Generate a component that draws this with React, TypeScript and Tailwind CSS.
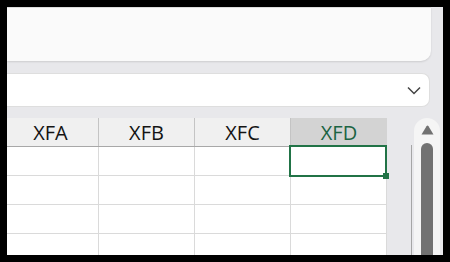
import React from "react";

const cols = ["XFA", "XFB", "XFC", "XFD"];
const rows = [0, 1, 2, 3];

export default function App() {
  return (
    <div className="w-[450px] h-[262px] bg-black p-[7px]" style={{ fontFamily: '"Open Sans", "Noto Sans", sans-serif' }}>
      <div className="w-[436px] h-[248px] bg-[#e8e8eb] overflow-hidden flex flex-col">
        {/* top panel */}
        <div className="h-[54px] mr-[12px] shrink-0 bg-[#fafafa] border-t border-[#dcdcdc] rounded-br-[10px] shadow-[0_1px_2px_rgba(0,0,0,0.12)]" />

        {/* dropdown */}
        <div className="mt-[12px] h-[34px] mr-[13px] shrink-0 bg-white border border-l-0 border-[#dedede] rounded-r-[8px] flex items-center justify-end pr-[8px]">
          <svg width="14" height="9" viewBox="0 0 14 9" fill="none">
            <path d="M1 1.5 L7 7.5 L13 1.5" stroke="#444" strokeWidth="1.5" />
          </svg>
        </div>

        {/* sheet + scrollbar */}
        <div className="mt-[11px] flex flex-1 min-h-0">
          <div className="-ml-[4px] w-[384px] shrink-0">
            <div className="flex h-[29px] border-b border-[#a8a8a8]">
              {cols.map((c) => (
                <div
                  key={c}
                  className={`w-[96px] shrink-0 border-r border-[#c4c4c4] flex items-center justify-center text-[20px] leading-none pt-[1px] ${
                    c === "XFD" ? "bg-[#d3d3d3] text-[#1b6443] border-r-0" : "bg-[#f0f0f0] text-[#141414]"
                  }`}
                >
                  {c}
                </div>
              ))}
            </div>
            {rows.map((r) => (
              <div key={r} className="flex h-[29px] bg-white border-b border-[#dadada]">
                {cols.map((c) => (
                  <div key={c} className="relative w-[96px] shrink-0 border-r border-[#dadada]">
                    {r === 0 && c === "XFD" && (
                      <div className="absolute -left-[2px] -top-[2px] w-[98px] h-[32px] border-2 border-[#217346] z-10">
                        <div className="absolute -right-[4px] -bottom-[4px] w-[6px] h-[6px] bg-[#217346]" />
                      </div>
                    )}
                  </div>
                ))}
              </div>
            ))}
          </div>

          <div className="w-[25px] shrink-0 flex justify-end">
            <div className="mt-[27px] w-px bg-[#a6a6a6]" />
          </div>
          <div className="ml-[2px] w-[26px] shrink-0 bg-[#f5f5f5] rounded-t-full flex flex-col items-center pt-[7px]">
            <svg width="13" height="10" viewBox="0 0 13 10">
              <path d="M6.5 0.5 Q7 0.5 7.5 1.3 L12.5 9.5 L0.5 9.5 L5.5 1.3 Q6 0.5 6.5 0.5 Z" fill="#727272" />
            </svg>
            <div className="mt-[8px] w-[12px] flex-1 bg-[#727272] rounded-t-full" />
          </div>
        </div>
      </div>
    </div>
  );
}
